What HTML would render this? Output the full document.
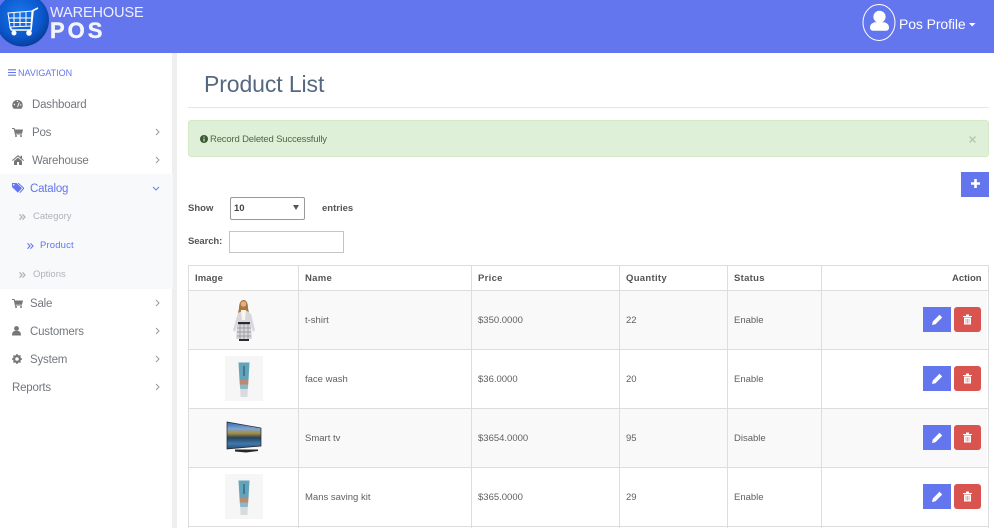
<!DOCTYPE html>
<html><head><meta charset="utf-8">
<style>
html,body{margin:0;padding:0;background:#fff}
#p{position:relative;width:994px;height:528px;overflow:hidden;background:#fff;font-family:"Liberation Sans",sans-serif;color:#555}
#p div,#p svg,#p span.t{position:absolute}
.t{white-space:nowrap;line-height:14px}
.m{font-size:11.5px;color:#73777d;letter-spacing:-.2px}
.s{font-size:9.5px;letter-spacing:0}
.c{font-size:9.5px;color:#5f5f5f;letter-spacing:0}
.h{font-size:9.5px;font-weight:bold;color:#555;letter-spacing:.3px}
.h2{font-size:9.5px;font-weight:bold;color:#555;letter-spacing:0}
.l{background:#ddd}
.chev{fill:none;stroke:#999;stroke-width:1}
</style></head><body><div id="p">

<div style="left:0;top:0;width:994px;height:53px;background:#6376ee"></div>

<!-- logo -->
<svg style="left:-6px;top:-8px" width="56" height="56" viewBox="0 0 56 56">
<defs><radialGradient id="g" cx=".45" cy=".4" r=".65"><stop offset="0" stop-color="#1a78ec"/><stop offset=".65" stop-color="#0b57cc"/><stop offset="1" stop-color="#07398f"/></radialGradient></defs>
<circle cx="28.500" cy="28" r="26.500" fill="url(#g)"/>
<g fill="none" stroke="#fff">
<path d="M14 21L38 19L37 34L16 35Z M15 26H37.500 M15 30.500H37 M20 20.500V35 M26 20V34.500 M32 19.500V34" stroke-width="1"/>
<path d="M16 35L17.500 38H37L39 18.500L44 16" stroke-width="1.600"/>
</g>
<circle cx="20" cy="41" r="2.500" fill="#fff"/><circle cx="35" cy="41" r="2.800" fill="#fff"/>
</svg>
<span class="t" style="left:50px;top:5px;font-size:14.500px;line-height:16px;color:#eef0ff;letter-spacing:-.1px">WAREHOUSE</span>
<span class="t" style="left:50px;top:19px;font-size:22px;line-height:23px;font-weight:bold;color:#f4f5fa;letter-spacing:3px;-webkit-text-stroke:.4px #f4f5fa">POS</span>

<!-- profile -->
<svg style="left:862px;top:3px" width="34" height="39" viewBox="0 0 34 39">
<ellipse cx="17" cy="19.500" rx="16" ry="18" fill="none" stroke="#fff" stroke-width="1"/>
<circle cx="17.500" cy="13.800" r="6.100" fill="#fff"/>
<path d="M8 24.500c0-3.500 3-5 5-5.300h9c2 .3 5 1.800 5 5.300 0 2-1.200 3.200-3 3.200H11c-1.800 0-3-1.200-3-3.200z" fill="#fff"/>
</svg>
<span class="t" style="left:899px;top:17px;font-size:14px;color:#fff;letter-spacing:-.1px">Pos Profile</span>
<svg style="left:969px;top:23px" width="7" height="4"><path d="M0 0H6.500L3.200 3.500z" fill="#fff"/></svg>

<!-- sidebar -->
<div style="left:172px;top:53px;width:5px;height:475px;background:#efefef"></div>
<div style="left:0;top:174px;width:173px;height:115px;background:#f7f9fb"></div>
<svg style="left:8px;top:69px" width="8" height="7"><path d="M0 .8H8M0 3.500H8M0 6.200H8" stroke="#6376ee" stroke-width="1.100"/></svg>
<span class="t" style="left:18px;top:66px;font-size:9px;color:#6376ee">NAVIGATION</span>

<svg style="left:12px;top:99px" width="11" height="10" viewBox="0 0 11 10"><path d="M1.600 9.800A5.300 5.300 0 1 1 9.400 9.800Z" fill="#777"/><path d="M5.500 8L7.300 3.500" stroke="#fff" stroke-width="1"/><circle cx="2.400" cy="5.500" r=".7" fill="#fff"/><circle cx="5.500" cy="2.300" r=".7" fill="#fff"/><circle cx="8.800" cy="6" r=".7" fill="#fff"/></svg>
<span class="t m" style="left:32px;top:98px">Dashboard</span>

<svg style="left:12px;top:128px" width="11" height="9" viewBox="0 0 11 9"><path d="M0 0H2.500L3 1.500H11L10 5.800H3.700L3.800 6.500H10V7H3L1.800 1H0Z" fill="#777"/><circle cx="4" cy="8" r="1" fill="#777"/><circle cx="9" cy="8" r="1" fill="#777"/></svg>
<span class="t m" style="left:32px;top:126px">Pos</span>
<svg class="chev" style="left:155px;top:128px" width="5" height="8"><path d="M1 1L4 4L1 7"/></svg>

<svg style="left:12px;top:155px" width="12" height="10" viewBox="0 0 12 10"><path d="M0 5.200L6 0L8.500 2.200V.8H10V3.500L12 5.200L11.300 6L6 1.500L.7 6Z M2 6L6 2.600L10 6V10H7V7H5V10H2Z" fill="#777"/></svg>
<span class="t m" style="left:32px;top:154px">Warehouse</span>
<svg class="chev" style="left:155px;top:156px" width="5" height="8"><path d="M1 1L4 4L1 7"/></svg>

<svg style="left:12px;top:183px" width="12" height="10" viewBox="0 0 12 10"><path d="M0 0H4.500L10 5.200L5.800 9.600L0 4Z" fill="#6376ee"/><path d="M6 0L11.800 5.300L7.800 9.600" fill="none" stroke="#6376ee" stroke-width="1"/><circle cx="1.800" cy="1.800" r=".8" fill="#fff"/></svg>
<span class="t m" style="left:30px;top:182px;color:#6376ee">Catalog</span>
<svg style="left:152px;top:186px" width="8" height="5" fill="none" stroke="#6376ee" stroke-width=".9"><path d="M1 1L4 4L7 1"/></svg>

<svg style="left:19px;top:214px" width="7" height="6" fill="none" stroke="#b5b5b5" stroke-width="1.300"><path d="M.5 .3L3 3L.5 5.700M3.500 .3L6 3L3.500 5.700"/></svg>
<span class="t s" style="left:33px;top:210px;color:#b0b3b7">Category</span>
<svg style="left:27px;top:243px" width="7" height="6" fill="none" stroke="#6376ee" stroke-width="1.100"><path d="M.5 .3L3 3L.5 5.700M3.500 .3L6 3L3.500 5.700"/></svg>
<span class="t s" style="left:40px;top:239px;color:#6376ee;letter-spacing:.15px">Product</span>
<svg style="left:19px;top:272px" width="7" height="6" fill="none" stroke="#b5b5b5" stroke-width="1.300"><path d="M.5 .3L3 3L.5 5.700M3.500 .3L6 3L3.500 5.700"/></svg>
<span class="t s" style="left:33px;top:268px;color:#b0b3b7">Options</span>

<svg style="left:12px;top:299px" width="11" height="9" viewBox="0 0 11 9"><path d="M0 0H2.500L3 1.500H11L10 5.800H3.700L3.800 6.500H10V7H3L1.800 1H0Z" fill="#777"/><circle cx="4" cy="8" r="1" fill="#777"/><circle cx="9" cy="8" r="1" fill="#777"/></svg>
<span class="t m" style="left:30px;top:297px">Sale</span>
<svg class="chev" style="left:155px;top:299px" width="5" height="8"><path d="M1 1L4 4L1 7"/></svg>

<svg style="left:12px;top:326px" width="9" height="10" viewBox="0 0 9 10"><circle cx="4.500" cy="2.500" r="2.400" fill="#777"/><path d="M0 9.500C0 6 1.500 5 3 5H6C7.500 5 9 6 9 9.500Z" fill="#777"/></svg>
<span class="t m" style="left:30px;top:325px">Customers</span>
<svg class="chev" style="left:155px;top:327px" width="5" height="8"><path d="M1 1L4 4L1 7"/></svg>

<svg style="left:12px;top:354px" width="10" height="10" viewBox="0 0 10 10"><circle cx="5" cy="5" r="2.900" fill="none" stroke="#777" stroke-width="2.200"/><path d="M5 0V10M0 5H10M1.500 1.500L8.500 8.500M8.500 1.500L1.500 8.500" stroke="#777" stroke-width="1.500" stroke-dasharray="1.600 6.800 1.600"/></svg>
<span class="t m" style="left:30px;top:353px">System</span>
<svg class="chev" style="left:155px;top:355px" width="5" height="8"><path d="M1 1L4 4L1 7"/></svg>

<span class="t m" style="left:12px;top:381px">Reports</span>
<svg class="chev" style="left:155px;top:383px" width="5" height="8"><path d="M1 1L4 4L1 7"/></svg>

<!-- title -->
<span class="t" style="left:204px;top:69px;font-size:23px;line-height:30px;color:#566880;letter-spacing:-.1px">Product List</span>
<div style="left:188px;top:107px;width:801px;height:1px;background:#e6e6e6"></div>

<!-- alert -->
<div style="left:188px;top:120px;width:799px;height:35px;background:#dff0d8;border:1px solid #d6e9c6;border-radius:3px"></div>
<svg style="left:200px;top:135px" width="8" height="8" viewBox="0 0 8 8"><circle cx="4" cy="4" r="4" fill="#3c5a34"/><path d="M4 1.500V2.600M4 3.500V6.500" stroke="#dff0d8" stroke-width="1.100"/></svg>
<span class="t" style="left:210px;top:132px;font-size:9.5px;color:#4c6a44;letter-spacing:-.17px;margin-top:0.5px">Record Deleted Successfully</span>
<svg style="left:969px;top:136px" width="7" height="7"><path d="M.5 .5L6.500 6.500M6.500 .5L.5 6.500" stroke="#b4c2b0" stroke-width="1.300"/></svg>

<!-- add -->
<div style="left:961px;top:172px;width:28px;height:25px;background:#6376ee"></div>
<svg style="left:971px;top:179px" width="9" height="9"><path d="M4.500 0V9M0 4.500H9" stroke="#fff" stroke-width="2.600"/></svg>

<!-- controls -->
<span class="t h2" style="left:188px;top:202px">Show</span>
<div style="left:230px;top:197px;width:73px;height:21px;border:1px solid #999;border-radius:2px;background:#fff"></div>
<span class="t h2" style="left:234px;top:202px;color:#444">10</span>
<svg style="left:293px;top:205px" width="6" height="5"><path d="M0 0H6L3 5z" fill="#555"/></svg>
<span class="t h2" style="left:322px;top:202px">entries</span>
<span class="t h2" style="left:188px;top:235px;letter-spacing:-.1px">Search:</span>
<div style="left:229px;top:231px;width:113px;height:20px;border:1px solid #c4c4c4;background:#fff"></div>

<!-- table -->
<div style="left:189px;top:291px;width:798px;height:58px;background:#f9f9f9"></div>
<div style="left:189px;top:409px;width:798px;height:58px;background:#f9f9f9"></div>
<div class="l" style="left:188px;top:265px;width:801px;height:1px"></div>
<div class="l" style="left:188px;top:290px;width:801px;height:1px"></div>
<div class="l" style="left:188px;top:349px;width:801px;height:1px"></div>
<div class="l" style="left:188px;top:408px;width:801px;height:1px"></div>
<div class="l" style="left:188px;top:467px;width:801px;height:1px"></div>
<div class="l" style="left:188px;top:526px;width:801px;height:1px"></div>
<div class="l" style="left:188px;top:265px;width:1px;height:263px"></div>
<div class="l" style="left:298px;top:265px;width:1px;height:263px"></div>
<div class="l" style="left:471px;top:265px;width:1px;height:263px"></div>
<div class="l" style="left:619px;top:265px;width:1px;height:263px"></div>
<div class="l" style="left:727px;top:265px;width:1px;height:263px"></div>
<div class="l" style="left:821px;top:265px;width:1px;height:263px"></div>
<div class="l" style="left:988px;top:265px;width:1px;height:263px"></div>

<span class="t h" style="left:195px;top:272px;letter-spacing:.1px">Image</span>
<span class="t h" style="left:305px;top:272px">Name</span>
<span class="t h" style="left:478px;top:272px">Price</span>
<span class="t h" style="left:626px;top:272px">Quantity</span>
<span class="t h" style="left:734px;top:272px">Status</span>
<span class="t h" style="left:952px;top:272px;letter-spacing:0">Action</span>

<span class="t c" style="left:305px;top:314px">t-shirt</span>
<span class="t c" style="left:478px;top:314px">$350.0000</span>
<span class="t c" style="left:626px;top:314px">22</span>
<span class="t c" style="left:734px;top:314px">Enable</span>
<span class="t c" style="left:305px;top:373px">face wash</span>
<span class="t c" style="left:478px;top:373px">$36.0000</span>
<span class="t c" style="left:626px;top:373px">20</span>
<span class="t c" style="left:734px;top:373px">Enable</span>
<span class="t c" style="left:305px;top:432px">Smart tv</span>
<span class="t c" style="left:478px;top:432px">$3654.0000</span>
<span class="t c" style="left:626px;top:432px">95</span>
<span class="t c" style="left:734px;top:432px">Disable</span>
<span class="t c" style="left:305px;top:491px">Mans saving kit</span>
<span class="t c" style="left:478px;top:491px">$365.0000</span>
<span class="t c" style="left:626px;top:491px">29</span>
<span class="t c" style="left:734px;top:491px">Enable</span>

<!-- images -->
<svg style="left:225px;top:297px" width="38" height="46" viewBox="0 0 38 46">
<path d="M14 11C14 6 16 3 18.500 3C21.500 3 23 6 23 11L24 16H13Z" fill="#a9793f"/>
<circle cx="18.500" cy="7" r="2.700" fill="#e2b08c"/>
<path d="M13 16L17 14L22 14L26 17L30 33L28 35L26 28L27 42H11L12 28L10 35L8 33Z" fill="#d8d8dc"/>
<path d="M16 13L21 13L20 23L17 23Z" fill="#f8f4f0"/>
<rect x="13" y="25" width="12" height="2.200" fill="#2a2a2a"/>
<path d="M12 31H26M12 35H26M12 39H26M15 27V42M19 27V42M23 27V42" stroke="#8d8d92" stroke-width=".7"/>
<rect x="14" y="42" width="10" height="2" fill="#2c2c2c"/>
</svg>
<svg style="left:225px;top:356px" width="38" height="45" viewBox="0 0 38 45">
<rect width="38" height="45" fill="#f6f6f6"/>
<path d="M13.500 6.500H24.500L23.500 24H14.500Z" fill="#62a4ba"/><path d="M14.500 24H23.500L23.200 28.500H14.800Z" fill="#b88c74"/><path d="M14.800 28.500H23.200L22.800 33H15.200Z" fill="#8fb8c6"/><path d="M15.200 33H22.800L22.500 41H15.500Z" fill="#d6dcde"/><path d="M18 10H20V20H18Z" fill="#3f7a90"/>
</svg>
<svg style="left:225px;top:415px" width="38" height="45" viewBox="0 0 38 45">
<defs><linearGradient id="tv" x1="0" y1="0" x2="0" y2="1"><stop offset="0" stop-color="#2f69b8"/><stop offset=".25" stop-color="#7ea4cf"/><stop offset=".42" stop-color="#a68e3e"/><stop offset=".58" stop-color="#27435c"/><stop offset=".8" stop-color="#3f78ae"/><stop offset="1" stop-color="#274f78"/></linearGradient></defs>
<path d="M2 7L36 13V31L2 34Z" fill="url(#tv)"/><path d="M2 7L36 13V31L2 34Z" fill="none" stroke="#23232a" stroke-width=".7"/><path d="M10 34.500H33V36L21 37.500L10 36.500Z" fill="#26262b"/>
</svg>
<svg style="left:225px;top:474px" width="38" height="45" viewBox="0 0 38 45">
<rect width="38" height="45" fill="#f6f6f6"/>
<path d="M13.500 6.500H24.500L23.500 24H14.500Z" fill="#62a4ba"/><path d="M14.500 24H23.500L23.200 28.500H14.800Z" fill="#b88c74"/><path d="M14.800 28.500H23.200L22.800 33H15.200Z" fill="#8fb8c6"/><path d="M15.200 33H22.800L22.500 41H15.500Z" fill="#d6dcde"/><path d="M18 10H20V20H18Z" fill="#3f7a90"/>
</svg>

<!-- action buttons row 1 -->
<div style="left:923px;top:307px;width:28px;height:25px;background:#6376ee"></div>
<svg style="left:932px;top:314px" width="11" height="11" viewBox="0 0 11 11"><path d="M0 11L.8 7.500L7.500 .8L10.200 3.500L3.500 10.200Z" fill="#fff"/></svg>
<div style="left:954px;top:307px;width:27px;height:25px;background:#d9534f;border-radius:3px"></div>
<svg style="left:963px;top:314px" width="9" height="11" viewBox="0 0 9 11"><path d="M0 2H9V3H0ZM3 .5H6V2H3ZM1 3.500H8V10.500H1Z" fill="#fff"/><path d="M3 5V9.500M4.500 5V9.500M6 5V9.500" stroke="#d9534f" stroke-width=".5"/></svg>
<!-- row 2 -->
<div style="left:923px;top:366px;width:28px;height:25px;background:#6376ee"></div>
<svg style="left:932px;top:373px" width="11" height="11" viewBox="0 0 11 11"><path d="M0 11L.8 7.500L7.500 .8L10.200 3.500L3.500 10.200Z" fill="#fff"/></svg>
<div style="left:954px;top:366px;width:27px;height:25px;background:#d9534f;border-radius:3px"></div>
<svg style="left:963px;top:373px" width="9" height="11" viewBox="0 0 9 11"><path d="M0 2H9V3H0ZM3 .5H6V2H3ZM1 3.500H8V10.500H1Z" fill="#fff"/><path d="M3 5V9.500M4.500 5V9.500M6 5V9.500" stroke="#d9534f" stroke-width=".5"/></svg>
<!-- row 3 -->
<div style="left:923px;top:425px;width:28px;height:25px;background:#6376ee"></div>
<svg style="left:932px;top:432px" width="11" height="11" viewBox="0 0 11 11"><path d="M0 11L.8 7.500L7.500 .8L10.200 3.500L3.500 10.200Z" fill="#fff"/></svg>
<div style="left:954px;top:425px;width:27px;height:25px;background:#d9534f;border-radius:3px"></div>
<svg style="left:963px;top:432px" width="9" height="11" viewBox="0 0 9 11"><path d="M0 2H9V3H0ZM3 .5H6V2H3ZM1 3.500H8V10.500H1Z" fill="#fff"/><path d="M3 5V9.500M4.500 5V9.500M6 5V9.500" stroke="#d9534f" stroke-width=".5"/></svg>
<!-- row 4 -->
<div style="left:923px;top:484px;width:28px;height:25px;background:#6376ee"></div>
<svg style="left:932px;top:491px" width="11" height="11" viewBox="0 0 11 11"><path d="M0 11L.8 7.500L7.500 .8L10.200 3.500L3.500 10.200Z" fill="#fff"/></svg>
<div style="left:954px;top:484px;width:27px;height:25px;background:#d9534f;border-radius:3px"></div>
<svg style="left:963px;top:491px" width="9" height="11" viewBox="0 0 9 11"><path d="M0 2H9V3H0ZM3 .5H6V2H3ZM1 3.500H8V10.500H1Z" fill="#fff"/><path d="M3 5V9.500M4.500 5V9.500M6 5V9.500" stroke="#d9534f" stroke-width=".5"/></svg>

</div></body></html>
